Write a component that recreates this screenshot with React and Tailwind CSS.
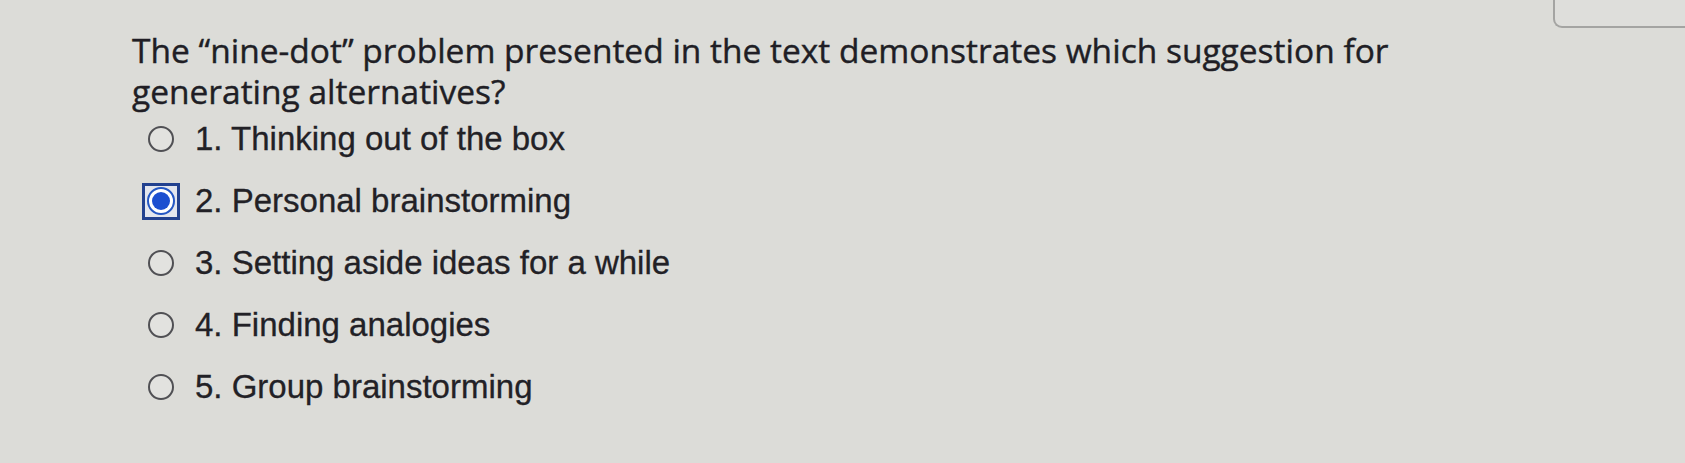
import React from "react";

const options = [
  "1. Thinking out of the box",
  "2. Personal brainstorming",
  "3. Setting aside ideas for a while",
  "4. Finding analogies",
  "5. Group brainstorming",
];

function Radio({ selected }) {
  if (selected) {
    return (
      <div className="w-[38px] h-[37px] border-[3px] border-[#22418f] bg-[#e3e6ee] flex items-center justify-center">
        <div className="w-[28px] h-[28px] rounded-full border-2 border-[#2457c4] bg-white flex items-center justify-center">
          <div className="w-[18px] h-[18px] rounded-full bg-[#1c4fd0]" />
        </div>
      </div>
    );
  }
  return (
    <div className="w-[38px] h-[36px] flex items-center justify-center">
      <div className="w-[26px] h-[26px] rounded-full border-2 border-[#505054] bg-[#e2e2df]" />
    </div>
  );
}

export default function App() {
  return (
    <div className="w-full min-h-[463px] bg-[#dcdcd8] flex">
      <div className="flex-1 pl-[132px] pt-[30px]">
        <p className="font-['Open_Sans',sans-serif] text-[33.5px] leading-[41px] font-medium text-[#201e25] [-webkit-text-stroke:0.4px_#201e25] max-w-[1320px]">
          The “nine-dot” problem presented in the text demonstrates which suggestion for
          <br />
          generating alternatives?
        </p>
        <div className="-mt-1 flex flex-col">
          {options.map((o, i) => (
            <div key={i} className="h-[62px] flex items-center">
              <div className="ml-[10px]">
                <Radio selected={i === 1} />
              </div>
              <span className="ml-[15px] font-['Liberation_Sans',Arial,sans-serif] text-[33px] text-[#222126] [-webkit-text-stroke:0.3px_#222126]">
                {o}
              </span>
            </div>
          ))}
        </div>
      </div>
      <div className="w-[132px] h-[28px] border-l-2 border-b-2 border-[#a4a4a2] rounded-bl-[9px] bg-[#dededb]" />
    </div>
  );
}
